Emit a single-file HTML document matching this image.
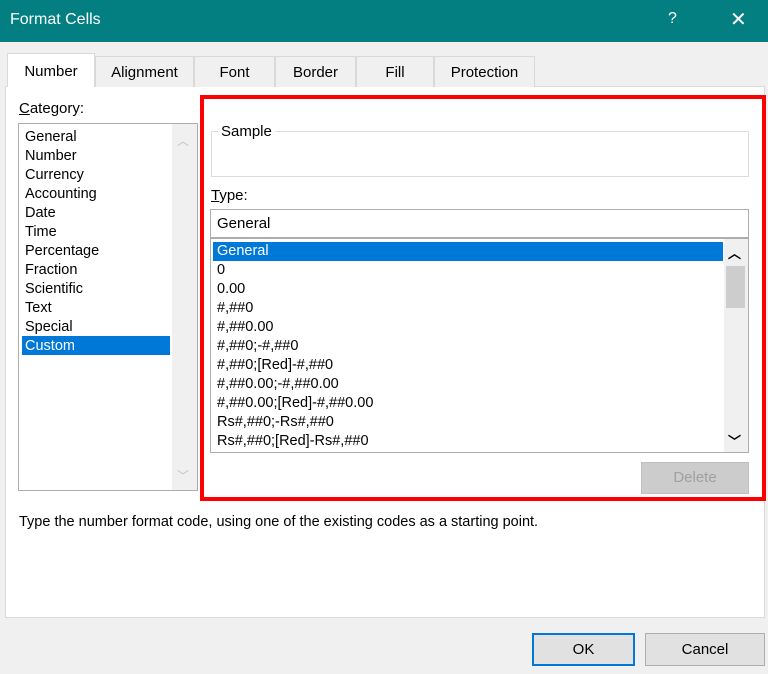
<!DOCTYPE html>
<html><head><style>
*{margin:0;padding:0;box-sizing:border-box}
body{width:768px;height:674px;background:#f0f0f0;font-family:"Liberation Sans",sans-serif;font-size:14px;color:#000;position:relative;overflow:hidden}
.a{position:absolute}
.title{left:0;top:0;width:768px;height:42px;background:#037f82;color:#fff;font-size:16px}
.tab{top:56px;height:31px;border:1px solid #d9d9d9;border-bottom:none;background:#f0f0f0;text-align:center;line-height:31px;font-size:15px}
.panel{left:5px;top:86px;width:760px;height:532px;background:#fff;border:1px solid #d9d9d9}
.row{position:absolute;left:0;font-size:14.5px;line-height:19px;white-space:nowrap}
</style></head><body>
<div class="a title"><span class="a" style="left:10px;top:11px">Format Cells</span><span class="a" style="left:668px;top:10px">?</span><span class="a" style="left:730px;top:7px;font-size:20px">✕</span></div>
<div class="a panel"></div>
<div class="a tab" style="left:7px;top:53px;width:88px;height:34px;background:#fff;border-color:#d9d9d9;line-height:36px">Number</div>
<div class="a tab" style="left:95px;width:99px">Alignment</div>
<div class="a tab" style="left:194px;width:81px">Font</div>
<div class="a tab" style="left:275px;width:81px">Border</div>
<div class="a tab" style="left:356px;width:78px">Fill</div>
<div class="a tab" style="left:434px;width:101px">Protection</div>
<div class="a" style="left:19px;top:100px;font-size:15px"><u>C</u>ategory:</div>
<div class="a" style="left:18px;top:123px;width:180px;height:368px;border:1px solid #adadad;background:#fff">
 <div class="a" style="right:0;top:0;width:25px;height:366px;background:#f0f0f0"></div>
 <div class="a" style="right:8px;top:8px;color:#c0c0c0;font-size:12px">︿</div>
 <div class="a" style="right:8px;bottom:6px;color:#c0c0c0;font-size:12px">﹀</div>
 <div class="a" style="left:3px;top:212px;width:148px;height:19px;background:#0078d7"></div>
 <div class="row" style="left:6px;top:4px">General<br>Number<br>Currency<br>Accounting<br>Date<br>Time<br>Percentage<br>Fraction<br>Scientific<br>Text<br>Special<br><span style="color:#fff">Custom</span></div>
</div>
<div class="a" style="left:200px;top:95px;width:566px;height:406px;border:4px solid #f00"></div>
<div class="a" style="left:211px;top:131px;width:538px;height:46px;border:1px solid #dcdcdc"></div>
<div class="a" style="left:218px;top:123px;background:#fff;padding:0 3px;font-size:15px">Sample</div>
<div class="a" style="left:211px;top:187px;font-size:15px"><u>T</u>ype:</div>
<div class="a" style="left:210px;top:209px;width:539px;height:29px;border:1px solid #adadad;background:#fff"><span class="a" style="left:6px;top:5px;font-size:15px">General</span></div>
<div class="a" style="left:210px;top:238px;width:539px;height:215px;border:1px solid #adadad;background:#fff">
 <div class="a" style="right:0;top:0;width:24px;height:213px;background:#f0f0f0"></div>
 <div class="a" style="right:3px;top:27px;width:19px;height:42px;background:#cdcdcd"></div>
 <div class="a" style="right:7px;top:4px;font-size:13px;font-weight:bold">︿</div>
 <div class="a" style="right:7px;bottom:2px;font-size:13px;font-weight:bold">﹀</div>
 <div class="a" style="left:2px;top:3px;width:510px;height:19px;background:#0078d7"></div>
 <div class="row" style="left:6px;top:3px"><span style="color:#fff">General</span><br>0<br>0.00<br>#,##0<br>#,##0.00<br>#,##0;-#,##0<br>#,##0;[Red]-#,##0<br>#,##0.00;-#,##0.00<br>#,##0.00;[Red]-#,##0.00<br>Rs#,##0;-Rs#,##0<br>Rs#,##0;[Red]-Rs#,##0</div>
</div>
<div class="a" style="left:641px;top:462px;width:108px;height:32px;background:#cccccc;border:1px solid #bfbfbf;color:#a0a0a0;text-align:center;line-height:30px;font-size:15px">Delete</div>
<div class="a" style="left:19px;top:514px;font-size:14.5px">Type the number format code, using one of the existing codes as a starting point.</div>
<div class="a" style="left:532px;top:633px;width:103px;height:33px;background:#e1e1e1;border:2px solid #0078d7;text-align:center;line-height:29px;font-size:15px">OK</div>
<div class="a" style="left:645px;top:633px;width:120px;height:33px;background:#e1e1e1;border:1px solid #adadad;text-align:center;line-height:31px;font-size:15px">Cancel</div>
</body></html>
